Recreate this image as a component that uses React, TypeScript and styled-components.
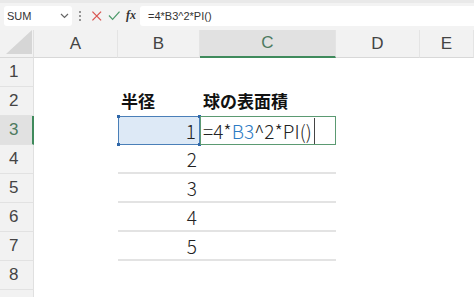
import styled, { createGlobalStyle } from "styled-components";

const GlobalStyle = createGlobalStyle`
  html, body {
    margin: 0;
    padding: 0;
    background: #ffffff;
  }
`;

const green = "#3f8a5c";
const jpFont = `"Noto Sans CJK JP", "Noto Sans", sans-serif`;
const uiFont = `"Liberation Sans", Arial, "Noto Sans CJK JP", sans-serif`;

const COLS = [
  { key: "A", width: 84 },
  { key: "B", width: 82 },
  { key: "C", width: 136 },
  { key: "D", width: 84 },
  { key: "E", width: 54 },
];

type CellData = { text?: string; bold?: boolean; right?: boolean; line?: boolean };

const rows: Record<number, Record<string, CellData>> = {
  2: { B: { text: "半径", bold: true }, C: { text: "球の表面積", bold: true } },
  4: { B: { text: "2", right: true, line: true }, C: { line: true } },
  5: { B: { text: "3", right: true, line: true }, C: { line: true } },
  6: { B: { text: "4", right: true, line: true }, C: { line: true } },
  7: { B: { text: "5", right: true, line: true }, C: { line: true } },
};

export default function App() {
  return (
    <>
      <GlobalStyle />
      <Screen>
        <FormulaBar>
          <NameBox>
            <span>SUM</span>
            <svg width="9" height="6" viewBox="0 0 9 6">
              <path d="M1 1 L4.5 4.5 L8 1" fill="none" stroke="#666" strokeWidth="1.2" />
            </svg>
          </NameBox>
          <Dots>
            <i />
            <i />
            <i />
          </Dots>
          <Actions>
            <svg width="12" height="12" viewBox="0 0 12 12">
              <path d="M1.5 1.5 L10.5 10.5 M10.5 1.5 L1.5 10.5" stroke="#d9534f" strokeWidth="1.3" />
            </svg>
            <svg width="13" height="11" viewBox="0 0 13 11">
              <path d="M1 5.5 L4.8 9.5 L12 1.5" fill="none" stroke="#4c9a6a" strokeWidth="1.3" />
            </svg>
            <Fx>fx</Fx>
          </Actions>
          <FormulaInput>=4*B3^2*PI()</FormulaInput>
        </FormulaBar>

        <Sheet>
          <Corner>
            <svg width="26" height="24" viewBox="0 0 26 24">
              <path d="M26 0 L26 24 L0 24 Z" fill="#d6d6d6" />
            </svg>
          </Corner>
          {COLS.map((c) => (
            <ColHeader key={c.key} $active={c.key === "C"}>
              {c.key}
            </ColHeader>
          ))}

          {Array.from({ length: 8 }, (_, i) => i + 1).map((r) => (
            <Row key={r} r={r} />
          ))}
          <RowHeader $active={false} />
        </Sheet>
      </Screen>
    </>
  );
}

const Row = ({ r }: { r: number }) => {
  const data = rows[r] || {};
  return (
    <>
      <RowHeader $active={r === 3}>{r}</RowHeader>
      {COLS.map((c) => {
        if (r === 3 && c.key === "B") {
          return (
            <RefCell key={c.key}>
              <Num>1</Num>
              <Handle $pos="tl" />
              <Handle $pos="tr" />
              <Handle $pos="bl" />
              <Handle $pos="br" />
            </RefCell>
          );
        }
        if (r === 3 && c.key === "C") {
          return (
            <EditCell key={c.key}>
              <EditText>
                =4*<RefText>B3</RefText>^2*PI()
              </EditText>
              <Caret />
            </EditCell>
          );
        }
        const d = data[c.key];
        return (
          <Cell key={c.key} $line={!!d?.line} $right={!!d?.right}>
            {d?.text &&
              (d.bold ? <Heading>{d.text}</Heading> : <Num>{d.text}</Num>)}
          </Cell>
        );
      })}
    </>
  );
};

const Screen = styled.div`
  width: 474px;
  height: 297px;
  overflow: hidden;
  background: #ffffff;
  display: flex;
  flex-direction: column;
`;

const FormulaBar = styled.div`
  height: 30px;
  flex: none;
  box-sizing: border-box;
  border-top: 3px solid #e9e9e9;
  background: #f3f3f3;
  display: flex;
  align-items: center;
  padding: 0 0 2px 4px;
`;

const NameBox = styled.div`
  width: 68px;
  height: 20px;
  box-sizing: border-box;
  background: #ffffff;
  border-radius: 3px;
  display: flex;
  align-items: center;
  justify-content: space-between;
  padding: 0 3px;
  font-family: ${uiFont};
  font-size: 11px;
  color: #333;
`;

const Dots = styled.div`
  width: 16px;
  display: flex;
  flex-direction: column;
  align-items: center;
  gap: 2px;
  i {
    width: 2px;
    height: 2px;
    border-radius: 1px;
    background: #777;
  }
`;

const Actions = styled.div`
  width: 48px;
  height: 20px;
  display: flex;
  align-items: center;
  gap: 5px;
  padding-left: 3px;
  box-sizing: border-box;
`;

const Fx = styled.span`
  font-family: "Liberation Serif", "Times New Roman", serif;
  font-style: italic;
  font-weight: bold;
  font-size: 12px;
  color: #333;
  margin-left: 1px;
`;

const FormulaInput = styled.div`
  flex: 1;
  height: 20px;
  margin-left: 4px;
  background: #ffffff;
  border-radius: 3px 0 0 3px;
  display: flex;
  align-items: center;
  padding-left: 8px;
  font-family: ${uiFont};
  font-size: 11px;
  color: #333;
`;

const Sheet = styled.div`
  display: grid;
  grid-template-columns: 34px ${COLS.map((c) => `${c.width}px`).join(" ")};
  grid-template-rows: 28px repeat(9, 29px);
`;

const Corner = styled.div`
  background: #f2f2f2;
  border-right: 1px solid #e0e0e0;
  border-bottom: 1px solid #d8d8d8;
  display: flex;
  align-items: flex-end;
  justify-content: flex-end;
  padding: 0 1px 3px 0;
`;

const ColHeader = styled.div<{ $active: boolean }>`
  background: ${(p) => (p.$active ? "#e1e1e1" : "#f2f2f2")};
  border-right: 1px solid #e4e4e4;
  border-bottom: ${(p) => (p.$active ? `2px solid ${green}` : "1px solid #d8d8d8")};
  display: flex;
  align-items: center;
  justify-content: center;
  font-family: ${uiFont};
  font-size: 17px;
  color: ${(p) => (p.$active ? "#4d7a5f" : "#444")};
`;

const RowHeader = styled.div<{ $active: boolean }>`
  background: ${(p) => (p.$active ? "#e1e1e1" : "#f2f2f2")};
  border-bottom: 1px solid #e2e2e2;
  border-right: ${(p) => (p.$active ? `2px solid ${green}` : "1px solid #e0e0e0")};
  box-sizing: border-box;
  display: flex;
  align-items: center;
  padding-left: 9px;
  font-family: ${uiFont};
  font-size: 17px;
  color: ${(p) => (p.$active ? "#4d7a5f" : "#444")};
`;

const Cell = styled.div<{ $line: boolean; $right: boolean }>`
  box-sizing: border-box;
  border-bottom: 2px solid ${(p) => (p.$line ? "#e3e3e3" : "transparent")};
  display: flex;
  align-items: center;
  justify-content: ${(p) => (p.$right ? "flex-end" : "flex-start")};
  padding: 0 3px;
`;

const Num = styled.span`
  font-family: ${jpFont};
  font-size: 19px;
  font-weight: 300;
  color: #222;
  line-height: 1;
`;

const Heading = styled.span`
  font-family: ${jpFont};
  font-size: 17px;
  font-weight: bold;
  color: #111;
  line-height: 1;
`;

const RefCell = styled.div`
  position: relative;
  box-sizing: border-box;
  background: #dde9f6;
  border: 1px solid #4a7fb8;
  display: flex;
  align-items: center;
  justify-content: flex-end;
  padding: 0 3px;
`;

const Handle = styled.i<{ $pos: "tl" | "tr" | "bl" | "br" }>`
  position: absolute;
  width: 3px;
  height: 3px;
  background: #2f67a8;
  ${(p) => (p.$pos[0] === "t" ? "top: -2px;" : "bottom: -2px;")}
  ${(p) => (p.$pos[1] === "l" ? "left: -2px;" : "right: -2px;")}
`;

const EditCell = styled.div`
  position: relative;
  box-sizing: border-box;
  border: 1px solid #5b9a72;
  display: flex;
  align-items: center;
  padding-left: 2px;
  overflow: hidden;
`;

const EditText = styled.span`
  font-family: ${jpFont};
  font-size: 19px;
  font-weight: 300;
  color: #222;
  line-height: 1;
  white-space: nowrap;
`;

const RefText = styled.span`
  color: #2e7bc4;
`;

const Caret = styled.i`
  width: 1px;
  height: 26px;
  background: #444;
  margin-left: 2px;
`;
